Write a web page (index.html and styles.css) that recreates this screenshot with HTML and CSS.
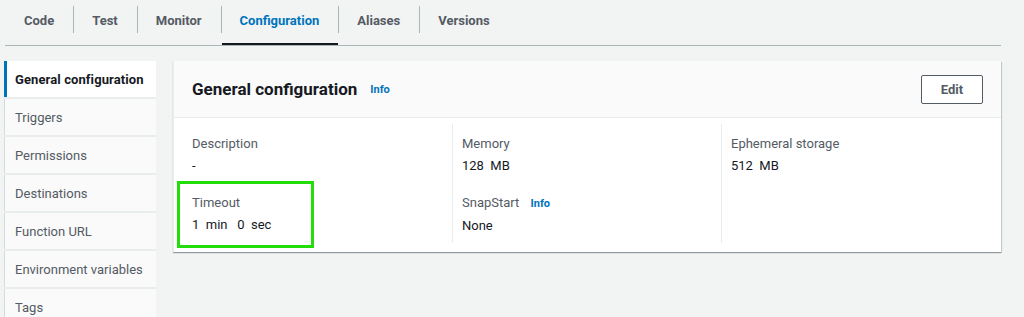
FILE: index.html
```html
<!DOCTYPE html>
<html lang="en">
<head>
<meta charset="utf-8">
<title>Configuration</title>
<link rel="stylesheet" href="styles.css">
</head>
<body>
<div class="tabs">
  <div class="tab">Code</div>
  <div class="tab">Test</div>
  <div class="tab">Monitor</div>
  <div class="tab active">Configuration</div>
  <div class="tab">Aliases</div>
  <div class="tab">Versions</div>
</div>
<div class="main">
  <nav class="sidenav">
    <div class="nav-item active">General configuration</div>
    <div class="nav-item">Triggers</div>
    <div class="nav-item">Permissions</div>
    <div class="nav-item">Destinations</div>
    <div class="nav-item">Function URL</div>
    <div class="nav-item">Environment variables</div>
    <div class="nav-item">Tags</div>
  </nav>
  <section class="card">
    <header class="card-header">
      <h2 class="card-title">General configuration <span class="info">Info</span></h2>
      <button class="btn">Edit</button>
    </header>
    <div class="card-body">
      <div class="col">
        <div class="field">
          <div class="label">Description</div>
          <div class="value">-</div>
        </div>
        <div class="field highlighted">
          <div class="label">Timeout</div>
          <div class="value">1&nbsp; min &nbsp; 0&nbsp; sec</div>
          <span class="highlight-box"></span>
        </div>
      </div>
      <div class="col divided">
        <div class="field">
          <div class="label">Memory</div>
          <div class="value">128&nbsp; MB</div>
        </div>
        <div class="field">
          <div class="label">SnapStart <span class="info">Info</span></div>
          <div class="value">None</div>
        </div>
      </div>
      <div class="col divided">
        <div class="field">
          <div class="label">Ephemeral storage</div>
          <div class="value">512&nbsp; MB</div>
        </div>
      </div>
    </div>
  </section>
</div>
</body>
</html>
```

FILE: styles.css
```css
* { box-sizing: border-box; }
html, body { margin: 0; padding: 0; }
body {
  background: #f2f3f3;
  font-family: Roboto, "Liberation Sans", Arial, sans-serif;
  font-size: 13px;
  color: #16191f;
  width: 1024px;
  height: 317px;
  overflow: hidden;
}

.tabs {
  display: flex;
  margin-left: 5px;
  width: 996px;
  height: 46px;
  border-bottom: 1px solid #aab7b8;
}
.tab {
  position: relative;
  padding: 0 19px;
  height: 45px;
  display: flex;
  align-items: center;
  padding-bottom: 5px;
  font-weight: 700;
  font-size: 13px;
  color: #545b64;
}
.tab + .tab::before {
  content: "";
  position: absolute;
  left: 0;
  top: 6px;
  height: 27px;
  border-left: 1px solid #aab7b8;
}
.tab.active { color: #0073bb; }
.tab.active::after {
  content: "";
  position: absolute;
  left: 1px;
  right: 0;
  bottom: 0;
  height: 2px;
  background: #16191f;
}

.main {
  display: flex;
  align-items: flex-start;
  margin-top: 15px;
}

.sidenav {
  margin-left: 4px;
  width: 152px;
  display: flex;
  flex-direction: column;
  gap: 2px;
  background: #eaeded;
}
.nav-item {
  height: 36px;
  display: flex;
  align-items: center;
  padding-left: 10px;
  background: #fafafa;
  border-left: 1px solid #d5dbdb;
  color: #545b64;
  white-space: nowrap;
}
.nav-item.active {
  background: #ffffff;
  border-left: 3px solid #0073bb;
  padding-left: 8px;
  font-weight: 700;
  color: #16191f;
  letter-spacing: 0.1px;
}

.card {
  margin-left: 17px;
  width: 828px;
  background: #ffffff;
  border-left: 1px solid #eaeded;
  box-shadow: 0 1px 1px 0 rgba(0, 28, 36, 0.3), 1px 1px 1px 0 rgba(0, 28, 36, 0.15);
}
.card-header {
  height: 57px;
  display: flex;
  align-items: center;
  justify-content: space-between;
  padding: 0 18px 0 18px;
  background: #fafafa;
  border-bottom: 1px solid #eaeded;
}
.card-title {
  margin: 0;
  font-size: 17px;
  font-weight: 700;
  color: #16191f;
  display: flex;
  align-items: center;
}
.card-title .info { margin-left: 13px; margin-top: 1px; }
.info {
  font-size: 11px;
  font-weight: 700;
  color: #0073bb;
}
.label .info { margin-left: 8px; }
.btn {
  width: 62px;
  height: 29px;
  background: #ffffff;
  border: 1px solid #545b64;
  border-radius: 2px;
  font-family: inherit;
  font-size: 13px;
  font-weight: 700;
  color: #545b64;
  padding: 0;
}

.card-body {
  display: grid;
  grid-template-columns: 260px 269px 1fr;
  padding: 6px 19px 9px 18px;
}
.col {
  padding-top: 10px;
  padding-bottom: 7px;
}
.col.divided {
  border-left: 1px solid #eaeded;
  padding-left: 9px;
}
.field { position: relative; }
.field + .field { margin-top: 17px; }
.label {
  line-height: 20px;
  color: #545b64;
}
.value {
  margin-top: 2px;
  line-height: 20px;
  color: #16191f;
}
.highlight-box {
  position: absolute;
  left: -15px;
  top: -12px;
  width: 137px;
  height: 67px;
  border: 3px solid #22dd0a;
  pointer-events: none;
}
```
